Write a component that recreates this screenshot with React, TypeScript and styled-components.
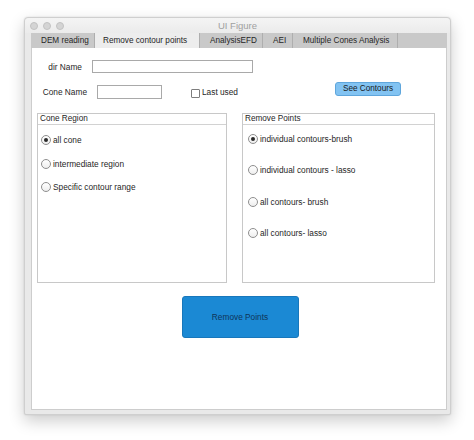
import React from "react";
import styled, { createGlobalStyle } from "styled-components";

const Global = createGlobalStyle`
  html, body { margin: 0; padding: 0; background: #ffffff; }
  body { font-family: "Liberation Sans", Arial, Helvetica, sans-serif; color: #2a2a2a; }
  * { box-sizing: border-box; }
`;

const Page = styled.div`
  width: 474px;
  height: 440px;
  padding: 17px 0 0 24px;
`;

const Window = styled.div`
  width: 427px;
  height: 398px;
  background: #e9e9e9;
  border: 1px solid #cfcfcf;
  border-radius: 4px 4px 2px 2px;
  box-shadow: 0 6px 16px rgba(0, 0, 0, 0.2), 0 0 2px rgba(0, 0, 0, 0.12);
  display: flex;
  flex-direction: column;
`;

const TitleBar = styled.div`
  height: 15px;
  display: flex;
  align-items: center;
  padding-left: 5px;
  background: linear-gradient(#f4f4f4, #ebebeb);
  border-radius: 4px 4px 0 0;
  position: relative;
`;

const Light = styled.span`
  width: 8px;
  height: 8px;
  border-radius: 50%;
  background: #d4d4d4;
  border: 1px solid #c2c2c2;
  margin-right: 5px;
`;

const Title = styled.div`
  position: absolute;
  left: 0;
  right: 0;
  top: 0;
  height: 15px;
  line-height: 15px;
  text-align: center;
  font-size: 9.5px;
  color: #a0a0a0;
  pointer-events: none;
`;

const Body = styled.div`
  flex: 1;
  display: flex;
  flex-direction: column;
  padding: 0 3px 4px 6px;
`;

const TabStrip = styled.div`
  height: 15px;
  display: flex;
  background: #c9c9c9;
`;

const Tab = styled.div<{ $w?: number; $active?: boolean }>`
  ${(p) => (p.$w ? `width: ${p.$w}px;` : "flex: 1;")}
  height: 15px;
  line-height: 15px;
  font-size: 8.2px;
  color: #262626;
  padding-left: ${(p) => (p.$active ? 8 : 10)}px;
  background: ${(p) => (p.$active ? "#ededed" : "#c9c9c9")};
  border-right: 1px solid #aeaeae;
  white-space: nowrap;
  &:last-child { border-right: none; }
`;

const Content = styled.div`
  flex: 1;
  background: #ffffff;
  border: 1px solid #cdcdcd;
  border-top: none;
  display: flex;
  flex-direction: column;
  padding: 12px 0 0 0;
`;

const Row = styled.div<{ $h: number; $mt?: number }>`
  display: flex;
  align-items: flex-start;
  height: ${(p) => p.$h}px;
  margin-top: ${(p) => p.$mt ?? 0}px;
`;

const Label = styled.div<{ $w: number; $mt?: number }>`
  width: ${(p) => p.$w}px;
  text-align: right;
  font-size: 8.3px;
  line-height: 10px;
  margin-top: ${(p) => p.$mt ?? 0}px;
  color: #262626;
  white-space: nowrap;
`;

const TextField = styled.div<{ $w: number; $h: number; $ml: number; $mt?: number }>`
  width: ${(p) => p.$w}px;
  height: ${(p) => p.$h}px;
  margin-left: ${(p) => p.$ml}px;
  margin-top: ${(p) => p.$mt ?? 0}px;
  border: 1px solid #a9a9a9;
  background: #fff;
`;

const Check = styled.div`
  width: 9px;
  height: 9px;
  margin-left: 29px;
  margin-top: 7px;
  border: 1px solid #7d7d7d;
  border-radius: 1px;
  background: #fff;
`;

const CheckLabel = styled.div`
  font-size: 8.3px;
  line-height: 10px;
  margin-left: 2px;
  margin-top: 5px;
  color: #262626;
`;

const SmallButton = styled.div`
  margin-left: auto;
  margin-right: 45px;
  width: 66px;
  height: 14px;
  line-height: 12px;
  text-align: center;
  font-size: 8.2px;
  color: #1a1a1a;
  background: #82c3f2;
  border: 1px solid #5fa6dc;
  border-radius: 3px;
`;

const Panels = styled.div`
  display: grid;
  grid-template-columns: 190px 193px;
  column-gap: 15px;
  margin: 14px 0 0 5px;
  height: 170px;
`;

const Panel = styled.div`
  border: 1px solid #c8c8c8;
  display: flex;
  flex-direction: column;
`;

const PanelHeader = styled.div`
  height: 11px;
  line-height: 10px;
  font-size: 8.2px;
  padding-left: 2px;
  border-bottom: 1px solid #d2d2d2;
  color: #262626;
`;

const PanelBody = styled.div<{ $pt: number; $gap: number; $pl: number }>`
  display: flex;
  flex-direction: column;
  padding: ${(p) => p.$pt}px 0 0 ${(p) => p.$pl}px;
  gap: ${(p) => p.$gap}px;
`;

const RadioRow = styled.div`
  display: flex;
  align-items: center;
  height: 10px;
  font-size: 8.3px;
  color: #262626;
  white-space: nowrap;
`;

const RadioCircle = styled.span<{ $on?: boolean }>`
  width: 10px;
  height: 10px;
  border-radius: 50%;
  border: 1px solid #8e8e8e;
  background: linear-gradient(#ffffff, #eeeeee);
  margin-right: 2px;
  display: flex;
  align-items: center;
  justify-content: center;
  &::after {
    content: "";
    width: 4px;
    height: 4px;
    border-radius: 50%;
    background: ${(p) => (p.$on ? "#2a2a2a" : "transparent")};
  }
`;

const BigButtonRow = styled.div`
  display: flex;
  justify-content: center;
  margin-top: 13px;
`;

const BigButton = styled.div`
  width: 117px;
  height: 42px;
  display: flex;
  align-items: center;
  justify-content: center;
  font-size: 8.3px;
  color: #0f3558;
  background: #1b89d4;
  border: 1px solid #1877bb;
  border-radius: 3px;
  margin-left: 2px;
`;

const Radio = ({ on, children }: { on?: boolean; children: React.ReactNode }) => (
  <RadioRow>
    <RadioCircle $on={on} />
    {children}
  </RadioRow>
);

export default function App() {
  return (
    <>
      <Global />
      <Page>
        <Window>
          <TitleBar>
            <Light />
            <Light />
            <Light />
            <Title>UI Figure</Title>
          </TitleBar>
          <Body>
            <TabStrip>
              <Tab $w={64}>DEM reading</Tab>
              <Tab $w={105} $active>Remove contour points</Tab>
              <Tab $w={63}>AnalysisEFD</Tab>
              <Tab $w={30}>AEI</Tab>
              <Tab $w={105}>Multiple Cones Analysis</Tab>
              <Tab />
            </TabStrip>
            <Content>
              <Row $h={13}>
                <Label $w={50} $mt={2}>dir Name</Label>
                <TextField $w={161} $h={13} $ml={10} />
              </Row>
              <Row $h={17} $mt={9}>
                <Label $w={55} $mt={5}>Cone Name</Label>
                <TextField $w={65} $h={14} $ml={10} $mt={3} />
                <Check />
                <CheckLabel>Last used</CheckLabel>
                <SmallButton>See Contours</SmallButton>
              </Row>
              <Panels>
                <Panel>
                  <PanelHeader>Cone Region</PanelHeader>
                  <PanelBody $pt={10} $gap={13.5} $pl={3}>
                    <Radio on>all cone</Radio>
                    <Radio>intermediate region</Radio>
                    <Radio>Specific contour range</Radio>
                  </PanelBody>
                </Panel>
                <Panel>
                  <PanelHeader>Remove Points</PanelHeader>
                  <PanelBody $pt={9} $gap={21.3} $pl={5}>
                    <Radio on>individual contours-brush</Radio>
                    <Radio>individual contours - lasso</Radio>
                    <Radio>all contours- brush</Radio>
                    <Radio>all contours- lasso</Radio>
                  </PanelBody>
                </Panel>
              </Panels>
              <BigButtonRow>
                <BigButton>Remove Points</BigButton>
              </BigButtonRow>
            </Content>
          </Body>
        </Window>
      </Page>
    </>
  );
}
